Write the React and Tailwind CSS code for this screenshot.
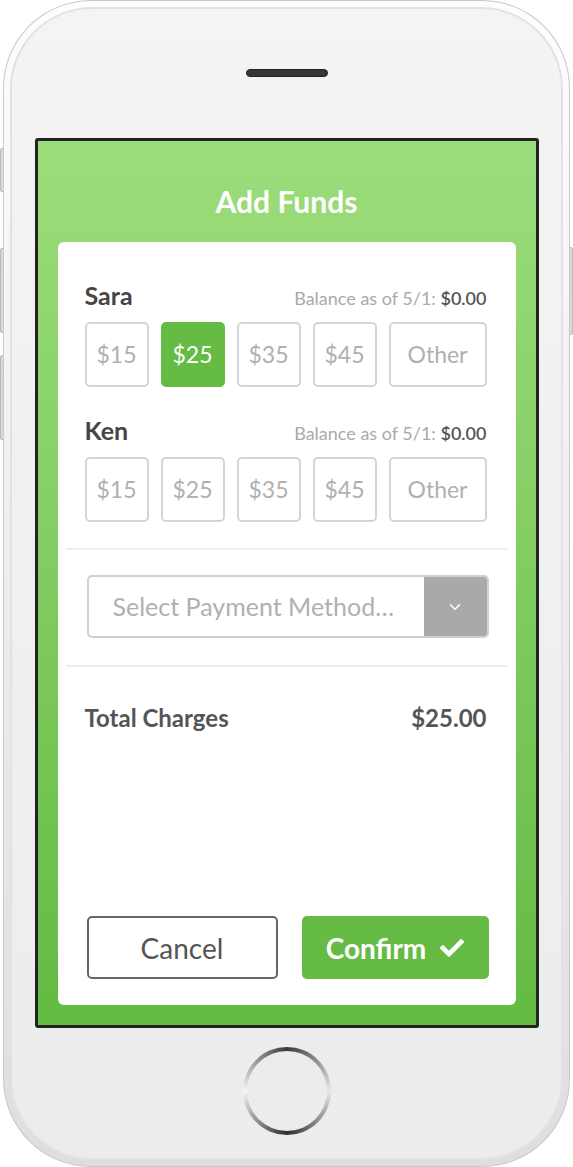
import React from "react";
import { ChevronDown } from "lucide-react";
import { FaCheck } from "react-icons/fa";

const font = { fontFamily: "Lato, 'Open Sans', sans-serif" };

function Amounts({ selected }) {
  const values = ["$15", "$25", "$35", "$45"];
  return (
    <div className="flex gap-[12px] mt-[13px]">
      {values.map((v) => (
        <button
          key={v}
          className={
            v === selected
              ? "w-[64px] h-[65px] rounded-[5px] bg-[#66bb44] border-2 border-[#66bb44] text-white text-[23px]"
              : "w-[64px] h-[65px] rounded-[5px] border-2 border-[#d4d4d4] text-[#b0b0b0] text-[23px]"
          }
        >
          {v}
        </button>
      ))}
      <button className="flex-1 h-[65px] rounded-[5px] border-2 border-[#d4d4d4] text-[#b0b0b0] text-[23px]">
        Other
      </button>
    </div>
  );
}

function Person({ name, selected }) {
  return (
    <div>
      <div className="flex justify-between items-baseline h-[28px] leading-[28px]">
        <span className="text-[25px] font-bold text-[#454545]">{name}</span>
        <span className="text-[18px] text-[#aaaaaa]">
          Balance as of 5/1: <span className="text-[#555] font-semibold">$0.00</span>
        </span>
      </div>
      <Amounts selected={selected} />
    </div>
  );
}

export default function App() {
  return (
    <div className="relative w-[573px] h-[1167px] bg-white" style={font}>
      {/* side buttons */}
      <div className="absolute left-0 top-[148px] w-[5px] h-[44px] rounded-l-[2px] bg-[#d9d9d9] border border-[#bbb]" />
      <div className="absolute left-0 top-[248px] w-[5px] h-[85px] rounded-l-[2px] bg-[#d9d9d9] border border-[#bbb]" />
      <div className="absolute left-0 top-[355px] w-[5px] h-[85px] rounded-l-[2px] bg-[#d9d9d9] border border-[#bbb]" />
      <div className="absolute right-0 top-[247px] w-[5px] h-[88px] rounded-r-[2px] bg-[#d9d9d9] border border-[#bbb]" />

      <div className="relative mx-[3px] h-full rounded-[88px] bg-[#c9c9c9] p-[1px]">
        <div className="h-full rounded-[87px] bg-linear-to-b from-[#fdfdfd] to-[#dedede] p-[6px]">
          <div className="h-full rounded-[82px] border-2 border-[#e2e2e2] bg-linear-to-b from-[#f4f4f4] to-[#ebecec] flex flex-col items-center">
            {/* speaker */}
            <div className="mt-[60px] w-[82px] h-[8px] rounded-full bg-[#363636] border border-[#222]" />

            {/* screen */}
            <div className="mt-[61px] w-[504px] h-[890px] border-[3px] border-[#232323] rounded-[3px] bg-linear-to-b from-[#9cdd7b] to-[#63bb43] flex flex-col px-[20px] pb-[20px]">
              <h1 className="text-center text-white text-[30px] font-bold h-[101px] pt-[40px] leading-[40px]">
                Add Funds
              </h1>
              <div className="flex-1 bg-white rounded-[6px] flex flex-col">
                <div className="pl-[27px] pr-[29px] pt-[39px]">
                  <Person name="Sara" selected="$25" />
                  <div className="mt-[29px]">
                    <Person name="Ken" />
                  </div>
                </div>

                <div className="mx-[8px] mt-[26px] h-[2px] bg-[#eeeeee]" />

                <div className="pl-[29px] pr-[27px] mt-[25px]">
                  <div className="flex h-[63px] rounded-[5px] border-2 border-[#d0d0d0] overflow-hidden">
                    <div className="flex-1 flex items-center pl-[24px] text-[25px] text-[#b0b0b0]">
                      Select Payment Method…
                    </div>
                    <div className="w-[63px] bg-[#a8a9ab] flex items-center justify-center">
                      <ChevronDown size={18} color="#ffffff" strokeWidth={2} />
                    </div>
                  </div>
                </div>

                <div className="mx-[8px] mt-[27px] h-[2px] bg-[#eeeeee]" />

                <div className="flex justify-between items-center pl-[27px] pr-[29px] mt-[36px] h-[30px]">
                  <span className="text-[24px] font-bold text-[#555]">Total Charges</span>
                  <span className="text-[24px] font-bold text-[#555]">$25.00</span>
                </div>

                <div className="mt-auto flex gap-[24px] pl-[29px] pr-[27px] pb-[26px]">
                  <button className="flex-1 h-[63px] rounded-[5px] border-2 border-[#666] text-[28px] text-[#555]">
                    Cancel
                  </button>
                  <button className="flex-1 h-[63px] rounded-[5px] bg-[#66bb44] text-white text-[28px] font-bold flex items-center justify-center gap-[14px]">
                    Confirm
                    <FaCheck size={24} />
                  </button>
                </div>
              </div>
            </div>

            {/* home button */}
            <div className="mt-[19px] w-[88px] h-[88px] rounded-full p-[4px] bg-[conic-gradient(from_0deg,#3a3a3a,#e8e8e8_25%,#2e2e2e_50%,#f5f5f5_75%,#3a3a3a)]">
              <div className="w-full h-full rounded-full bg-[#ebecec]" />
            </div>
          </div>
        </div>
      </div>
    </div>
  );
}
